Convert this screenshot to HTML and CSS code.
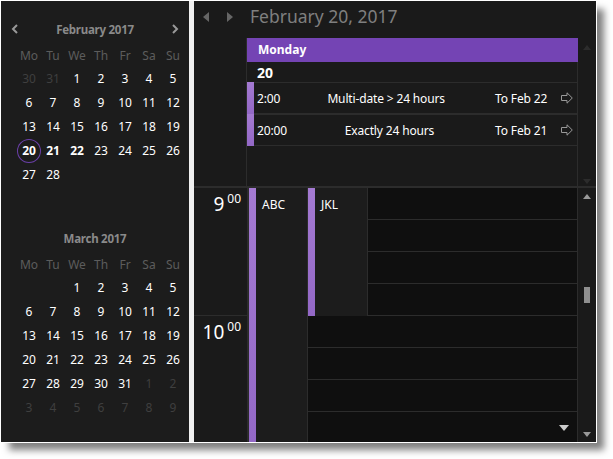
FILE: index.html
```html
<!DOCTYPE html>
<html lang="en">
<head>
  <meta charset="UTF-8">
  <title>Scheduler</title>
  <link rel="stylesheet" href="styles.css">
</head>
<body>
  <div class="window">
    <div class="side">
      <div class="month">
        <div class="month-title">
          <svg class="chev" width="8" height="10" viewBox="0 0 8 10"><path d="M6 1 2 5l4 4" fill="none" stroke="#999" stroke-width="2"/></svg>
          <span>February 2017</span>
          <svg class="chev" width="8" height="10" viewBox="0 0 8 10"><path d="M2 1l4 4-4 4" fill="none" stroke="#999" stroke-width="2"/></svg>
        </div>
        <div class="days">
          <span class="wd">Mo</span><span class="wd">Tu</span><span class="wd">We</span><span class="wd">Th</span><span class="wd">Fr</span><span class="wd">Sa</span><span class="wd">Su</span>
          <span class="off">30</span><span class="off">31</span><span>1</span><span>2</span><span>3</span><span>4</span><span>5</span>
          <span>6</span><span>7</span><span>8</span><span>9</span><span>10</span><span>11</span><span>12</span>
          <span>13</span><span>14</span><span>15</span><span>16</span><span>17</span><span>18</span><span>19</span>
          <span class="today">20</span><span class="bold">21</span><span class="bold">22</span><span>23</span><span>24</span><span>25</span><span>26</span>
          <span>27</span><span>28</span>
        </div>
      </div>
      <div class="month month-two">
        <div class="month-title month-title-center"><span>March 2017</span></div>
        <div class="days">
          <span class="wd">Mo</span><span class="wd">Tu</span><span class="wd">We</span><span class="wd">Th</span><span class="wd">Fr</span><span class="wd">Sa</span><span class="wd">Su</span>
          <span></span><span></span><span>1</span><span>2</span><span>3</span><span>4</span><span>5</span>
          <span>6</span><span>7</span><span>8</span><span>9</span><span>10</span><span>11</span><span>12</span>
          <span>13</span><span>14</span><span>15</span><span>16</span><span>17</span><span>18</span><span>19</span>
          <span>20</span><span>21</span><span>22</span><span>23</span><span>24</span><span>25</span><span>26</span>
          <span>27</span><span>28</span><span>29</span><span>30</span><span>31</span><span class="off">1</span><span class="off">2</span>
          <span class="off">3</span><span class="off">4</span><span class="off">5</span><span class="off">6</span><span class="off">7</span><span class="off">8</span><span class="off">9</span>
        </div>
      </div>
    </div>

    <div class="main">
      <div class="toolbar">
        <svg class="nav" width="7" height="10" viewBox="0 0 7 10"><path d="M6 0v10L0 5z" fill="#666"/></svg>
        <svg class="nav" width="7" height="10" viewBox="0 0 7 10"><path d="M1 0v10l6-5z" fill="#666"/></svg>
        <span class="date-title">February 20, 2017</span>
      </div>

      <div class="top">
        <div class="top-body">
          <div class="day-head">Monday</div>
          <div class="day-num">20</div>
          <div class="allday">
            <div class="ad-event">
              <span class="accent"></span>
              <span class="ad-time">2:00</span>
              <span class="ad-name">Multi-date &gt; 24 hours</span>
              <span class="ad-to">To Feb 22</span>
              <svg class="ad-arrow" width="12" height="12" viewBox="0 0 12 12"><path d="M.5 3.5h5.5V.8L11.3 6 6 11.2V8.500H.5z" fill="none" stroke="#999"/></svg>
            </div>
            <div class="ad-event">
              <span class="accent"></span>
              <span class="ad-time">20:00</span>
              <span class="ad-name">Exactly 24 hours</span>
              <span class="ad-to">To Feb 21</span>
              <svg class="ad-arrow" width="12" height="12" viewBox="0 0 12 12"><path d="M.5 3.5h5.5V.8L11.3 6 6 11.2V8.500H.5z" fill="none" stroke="#999"/></svg>
            </div>
          </div>
        </div>
        <div class="gutter">
          <svg width="8" height="5" viewBox="0 0 8 5"><path d="M0 5h8L4 0z" fill="#2c2c2c"/></svg>
          <svg width="8" height="5" viewBox="0 0 8 5"><path d="M0 0h8L4 5z" fill="#2c2c2c"/></svg>
        </div>
      </div>

      <div class="timeline">
        <div class="hours">
          <div class="hour"><span class="h">9</span><span class="m">00</span></div>
          <div class="hour"><span class="h">10</span><span class="m">00</span></div>
        </div>
        <div class="event event-long"><span class="accent"></span><span class="ev-name">ABC</span></div>
        <div class="rest">
          <div class="hour-row">
            <div class="event event-short"><span class="accent"></span><span class="ev-name">JKL</span></div>
            <div class="slots"><div></div><div></div><div></div><div></div></div>
          </div>
          <div class="hour-row">
            <div class="slots"><div></div><div></div><div></div><div></div></div>
          </div>
          <svg class="more" width="10" height="6" viewBox="0 0 10 6"><path d="M0 0h10L5 6z" fill="#ccc"/></svg>
        </div>
        <div class="scroll">
          <svg width="8" height="5" viewBox="0 0 8 5"><path d="M0 5h8L4 0z" fill="#999"/></svg>
          <span class="thumb"></span>
          <svg width="8" height="5" viewBox="0 0 8 5"><path d="M0 0h8L4 5z" fill="#999"/></svg>
        </div>
      </div>
    </div>
  </div>
</body>
</html>
```

FILE: styles.css
```css
html, body {
  margin: 0;
  height: 100%;
  background: #fff;
  overflow: hidden;
}
body {
  font-family: "Noto Sans", "Open Sans", sans-serif;
  font-size: 12px;
  color: #fff;
}
.window {
  display: flex;
  width: 595px;
  height: 441px;
  margin: 1px 0 0 1px;
  background: #f0f0f0;
  box-shadow: 0 0 0 1px #fff, 8px 8px 7px rgba(0, 0, 0, .5);
}

/* left calendars */
.side {
  width: 188px;
  background: #1c1c1c;
  flex: none;
}
.month {
  padding-left: 16px;
}
.month-two {
  margin-top: 23px;
}
.month-title {
  display: flex;
  justify-content: space-between;
  align-items: center;
  width: 168px;
  height: 20px;
  margin-left: -6px;
  padding: 18px 0 0;
  font-size: 11.5px;
  font-weight: 700;
  letter-spacing: -.25px;
  color: #8a8a8a;
}
.month-title-center {
  justify-content: center;
}
.days {
  display: grid;
  grid-template-columns: repeat(7, 24px);
  grid-auto-rows: 24px;
  margin-top: 4px;
  text-align: center;
  line-height: 24px;
}
.wd {
  color: #5c5c5c;
  line-height: 26px;
}
.off {
  color: #3f3f3f;
}
.bold {
  font-weight: 700;
}
.today {
  font-weight: 700;
  border-radius: 50%;
  box-shadow: inset 0 0 0 1px #6a3fa8;
}

/* main panel */
.main {
  display: flex;
  flex-direction: column;
  width: 402px;
  margin-left: 5px;
  background: #1a1a1a;
  flex: none;
}
.toolbar {
  display: flex;
  align-items: center;
  height: 37px;
  padding-left: 9px;
  flex: none;
}
.nav {
  margin-right: 16px;
  margin-bottom: 6px;
}
.date-title {
  margin-left: 1px;
  margin-bottom: 8px;
  font-size: 17.5px;
  color: #7f7f7f;
}
.top {
  display: flex;
  height: 148px;
  padding-left: 53px;
  border-bottom: 2px solid #2c2c2c;
  flex: none;
}
.top-body {
  width: 331px;
  border-right: 1px solid #2c2c2c;
  border-left: 1px solid #2c2c2c;
  margin-left: -1px;
}
.day-head {
  height: 24px;
  padding-left: 11px;
  margin-right: -1px;
  background: #7444b4;
  font-weight: 700;
  line-height: 24px;
}
.day-num {
  height: 20px;
  padding-left: 10px;
  font-size: 14px;
  font-weight: 700;
  line-height: 22px;
}
.ad-event {
  position: relative;
  display: flex;
  align-items: center;
  height: 32px;
  padding-left: 10px;
  border-top: 1px solid #2c2c2c;
  border-bottom: 1px solid #2c2c2c;
  box-sizing: border-box;
  letter-spacing: -.15px;
}
.ad-event .accent {
  top: -1px;
  bottom: -1px;
}
.accent {
  position: absolute;
  top: 0;
  bottom: 0;
  left: 0;
  width: 7px;
  background: linear-gradient(#a47ad2, #9368c6);
}
.ad-name {
  flex: 1;
  text-align: center;
  padding-right: 3px;
}
.ad-to {
  width: 66px;
}
.ad-arrow {
  margin-right: 4px;
}
.gutter {
  display: flex;
  flex-direction: column;
  justify-content: space-between;
  align-items: center;
  width: 18px;
  height: 146px;
  padding-top: 7px;
  box-sizing: border-box;
}

/* timeline */
.timeline {
  display: flex;
  flex: 1;
  min-height: 0;
  overflow: hidden;
}
.hours {
  width: 53px;
  border-right: 2px solid #2c2c2c;
  flex: none;
}
.hour {
  display: flex;
  justify-content: flex-end;
  height: 126px;
  padding: 1px 6px 0 0;
  border-bottom: 1px solid #2c2c2c;
}
.hour:last-child {
  border-bottom: 0;
}
.h {
  font-size: 19px;
  line-height: 30px;
}
.m {
  margin-left: 3px;
  font-size: 12px;
  line-height: 20px;
}
.event {
  position: relative;
  background: #1c1c1c;
  box-sizing: border-box;
  flex: none;
}
.event-long {
  width: 59px;
  border-right: 1px solid #2c2c2c;
}
.event-short {
  width: 60px;
  border-right: 1px solid #2c2c2c;
}
.ev-name {
  display: block;
  padding: 8px 0 0 13px;
}
.rest {
  position: relative;
  width: 269px;
  flex: none;
  background: #0f0f0f;
}
.hour-row {
  display: flex;
  height: 128px;
}
.slots {
  flex: 1;
}
.slots div {
  box-sizing: border-box;
  height: 32px;
  border-bottom: 1px solid #2c2c2c;
}
.more {
  position: absolute;
  right: 8px;
  bottom: 11px;
}
.scroll {
  display: flex;
  flex-direction: column;
  align-items: center;
  width: 19px;
  padding: 6px 0 5px;
  box-sizing: border-box;
  border-left: 1px solid #2c2c2c;
  flex: none;
}
.thumb {
  width: 6px;
  height: 16px;
  margin: 88px 0 auto;
  background: #8f8f8f;
}
```
